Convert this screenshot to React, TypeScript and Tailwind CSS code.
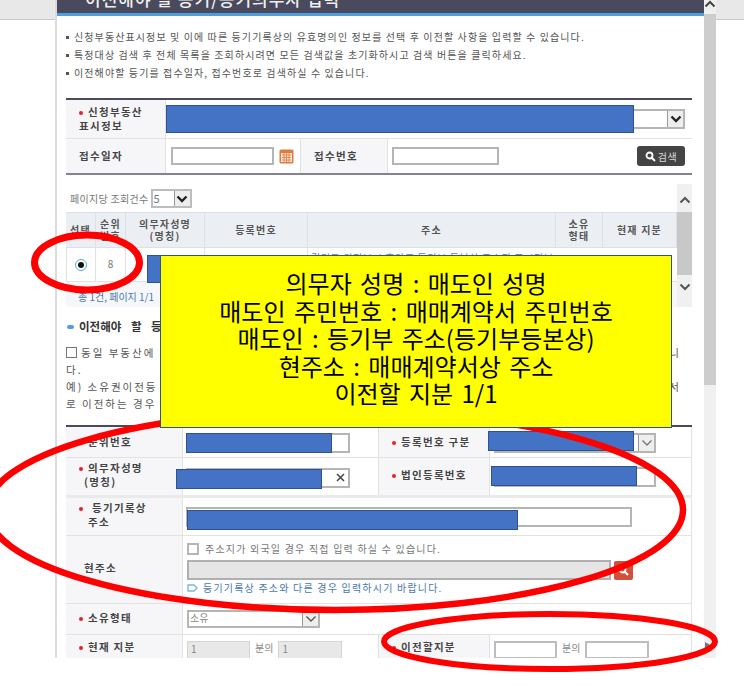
import React from "react";

const Chev = ({ c = "#222", w = 2.4 }: { c?: string; w?: number }) => (
  <svg width="12" height="8" viewBox="0 0 12 8" fill="none">
    <path d="M1.5 1.5 L6 6 L10.5 1.5" stroke={c} strokeWidth={w} />
  </svg>
);

const ChevBox = ({ w = "w-[16px]", c, sw }: { w?: string; c?: string; sw?: number }) => (
  <span className={`${w} h-full bg-[#eeeeee] border-l border-[#999] flex items-center justify-center`}>
    <Chev c={c} w={sw} />
  </span>
);

const Star = () => <span className="inline-block w-[4px] h-[4px] rounded-full bg-[#e8202a] mr-[5px] align-middle" />;

const Label = ({ children, w, star = true, h }: { children: React.ReactNode; w: string; star?: boolean; h?: string }) => (
  <div className={`${w} ${h ?? ""} shrink-0 bg-[#f6f6f9] flex items-center text-[10.5px] font-bold tracking-[1.3px] leading-[14px] text-[#444] pl-[13px]`}>
    <div>
      {star ? <Star /> : null}
      {children}
    </div>
  </div>
);

const Box = ({ cls }: { cls: string }) => <div className={`border-2 border-[#b5b5b5] ${cls}`} />;

const Th = ({ w, children }: { w: string; children: React.ReactNode }) => (
  <div className={`${w} shrink-0 h-full border-r border-[#dde0e5] flex items-center justify-center text-center text-[10px] font-bold tracking-[1.2px] leading-[12px] text-[#555]`}>
    <div>{children}</div>
  </div>
);

export default function App() {
  return (
    <div className="relative w-[744px] h-[686px] bg-white overflow-hidden font-['Noto_Sans_CJK_KR','Noto_Sans',sans-serif]">
      <div className="flex h-[658px]">
        <div className="w-[55px] shrink-0">
          <div className="h-[20px] bg-[#e8e8e8] border-b border-[#c8c8c8]" />
        </div>

        <div className="w-[649px] shrink-0 border-l-2 border-[#dcdcdc] h-full overflow-hidden">
          <div className="h-[16px] bg-[#4a4a5e] border-b-[3px] border-[#4f9fdc] overflow-hidden pl-[28px]">
            <div className="text-[#f0f0f0] text-[17px] font-medium leading-[20px] tracking-[1px] -mt-[11px] whitespace-nowrap">이전해야 할 등기/등기의무자 입력</div>
          </div>

          <div className="pl-[9px] pr-[12px]">
            <ul className="pt-[12px] h-[82px] text-[10px] leading-[18px] tracking-[1.1px] text-[#555]">
              <li className="flex items-center whitespace-nowrap"><span className="w-[3px] h-[3px] bg-[#555] mr-[5px]" />신청부동산표시정보 및 이에 따른 등기기록상의 유효명의인 정보를 선택 후 이전할 사항을 입력할 수 있습니다.</li>
              <li className="flex items-center whitespace-nowrap"><span className="w-[3px] h-[3px] bg-[#555] mr-[5px]" />특정대상 검색 후 전체 목록을 조회하시려면 모든 검색값을 초기화하시고 검색 버튼을 클릭하세요.</li>
              <li className="flex items-center whitespace-nowrap"><span className="w-[3px] h-[3px] bg-[#555] mr-[5px]" />이전해야할 등기를 접수일자, 접수번호로 검색하실 수 있습니다.</li>
            </ul>

            <div className="border-t-2 border-[#4a4a5e] border-b-2 border-b-[#84848f]">
              <div className="flex h-[39px] border-b border-[#e2e2e2]">
                <Label w="w-[99px]">신청부동산<br />표시정보</Label>
                <div className="flex-1 border-l border-[#e2e2e2] flex items-center pl-[6px] pr-[7px] pb-[1px]">
                  <div className="flex-1 h-[20px] border-2 border-[#b5b5b5] flex justify-end">
                    <ChevBox />
                  </div>
                </div>
              </div>
              <div className="flex h-[34px]">
                <Label w="w-[99px]" star={false}>접수일자</Label>
                <div className="w-[136px] border-x border-[#e2e2e2] flex items-center pl-[5px] gap-[5px]">
                  <Box cls="w-[103px] h-[18px] border-[#b0b0b0]" />
                  <svg width="15" height="16" viewBox="0 0 15 16">
                    <rect x="0.5" y="1.5" width="14" height="14" rx="1.5" fill="#e07a3e" />
                    <rect x="2" y="5" width="11" height="9" fill="#fbe6d4" />
                    <path d="M3 7h9M3 9.5h9M3 12h9M5 5v9M7.5 5v9M10 5v9" stroke="#e07a3e" strokeWidth="0.8" />
                  </svg>
                </div>
                <Label w="w-[86px]" star={false}>접수번호</Label>
                <div className="flex-1 border-l border-[#e2e2e2] flex items-center justify-between pl-[4px] pr-[7px]">
                  <Box cls="w-[107px] h-[18px] border-[#b0b0b0]" />
                  <div className="w-[48px] h-[20px] bg-[#444444] rounded-[3px] flex items-center justify-center gap-[2px] text-[10px] tracking-[0.5px] text-[#d8d8d8]">
                    <svg width="11" height="11" viewBox="0 0 11 11" fill="none">
                      <circle cx="4.5" cy="4.5" r="3" stroke="#fff" strokeWidth="1.8" />
                      <path d="M7 7 L10 10" stroke="#fff" strokeWidth="2" />
                    </svg>
                    검색
                  </div>
                </div>
              </div>
            </div>

            <div className="relative mt-[9px] h-[123px] flex">
              <div className="w-[611px] shrink-0">
                <div className="h-[28px] flex items-start pt-[5px] pl-[4px] text-[10px] leading-[19px] text-[#777]">
                  <span className="tracking-[0.3px]">페이지당 조회건수</span>
                  <div className="ml-[2px] w-[41px] h-[19px] border-2 border-[#bdbdbd] flex justify-between pl-[1px] leading-[14px] text-[11px]">
                    5
                    <ChevBox w="w-[16px]" />
                  </div>
                </div>
                <div className="flex h-[36px] bg-[#ebeef3] border-y border-[#dde0e5]">
                  <Th w="w-[30px]">선택</Th>
                  <Th w="w-[30px]">순위<br />번호</Th>
                  <Th w="w-[79px]">의무자성명<br />(명칭)</Th>
                  <Th w="w-[103px]">등록번호</Th>
                  <Th w="w-[248px]">주소</Th>
                  <Th w="w-[47px]">소유<br />형태</Th>
                  <Th w="w-[74px]">현재 지분</Th>
                </div>
                <div className="flex h-[34px] border-b border-[#e2e2e2] text-[10px] text-[#777]">
                  <div className="w-[30px] border-x border-[#e2e2e2] flex items-center justify-center">
                    <span className="w-[12px] h-[12px] rounded-full border border-[#4fa8dc] flex items-center justify-center">
                      <span className="w-[6px] h-[6px] rounded-full bg-[#111]" />
                    </span>
                  </div>
                  <div className="w-[30px] border-r border-[#e2e2e2] text-center pt-[10px] leading-[12px]">8</div>
                  <div className="w-[79px] border-r border-[#e2e2e2]" />
                  <div className="w-[103px] border-r border-[#e2e2e2]" />
                  <div className="w-[248px] pl-[3px] leading-[12px] pt-[4px] tracking-[0.6px] whitespace-nowrap overflow-hidden">경기도 의정부시 호암로 등기부 등본상 주소지 표시정보</div>
                </div>
                <div className="h-[25px] bg-[#f5f7fb] pl-[12px] pt-[8px] text-[10px] leading-[14px] text-[#4a78ad]">총 1건, 페이지 1/1</div>
              </div>
              <div className="w-[15px] shrink-0 h-full flex flex-col bg-[#f0f0f0]">
                <div className="h-[28px] flex items-center justify-center pt-[3px]"><span className="rotate-180 flex"><Chev c="#555" w={2} /></span></div>
                <div className="h-[63px] bg-[#c8c8c8]" />
                <div className="h-[24px] flex items-center justify-center"><Chev c="#555" w={2} /></div>
              </div>
            </div>

            <div className="mt-[12px] flex items-center h-[16px] text-[11.5px] font-bold [word-spacing:7px] text-[#333] pl-[1px]">
              <span className="w-[7px] h-[4px] rounded-full bg-[#4f9fdc] mr-[5px]" />
              이전해야 할 등기사항
            </div>
            <div className="mt-[9px] text-[10.5px] leading-[17px] tracking-[2px] text-[#555] h-[81px]">
              <div className="flex justify-between pr-[11px] items-center">
                <span className="flex items-center"><span className="w-[11px] h-[11px] border border-[#777] mr-[4px]" />동일 부동산에</span><span>니</span>
              </div>
              <div>다.</div>
              <div className="flex justify-between pr-[11px]"><span>예) 소유권이전등</span><span>서</span></div>
              <div>로 이전하는 경우</div>
            </div>

            <div className="border-t-2 border-[#4a4a5e] text-[#444]">
              <div className="flex h-[31px] border-b border-[#e2e2e2] border-r">
                <Label w="w-[116px]" h="pb-[1px]">순위번호</Label>
                <div className="w-[197px] border-x border-[#e2e2e2] flex items-center pl-[3px] pt-[1px]"><Box cls="w-[164px] h-[20px]" /></div>
                <Label w="w-[110px]" h="pb-[1px]">등록번호 구분</Label>
                <div className="flex-1 border-l border-[#e2e2e2] flex items-center pl-[4px] pt-[1px]">
                  <div className="w-[162px] h-[20px] border-2 border-[#b5b5b5] flex justify-end"><ChevBox c="#777" sw={1.4} /></div>
                </div>
              </div>
              <div className="flex h-[40px] border-b-[3px] border-[#eaeaea] border-r border-r-[#e2e2e2]">
                <Label w="w-[116px]" h="pb-[3px]">의무자성명<br /><span className="ml-[5px]">(명칭)</span></Label>
                <div className="w-[197px] border-x border-[#e2e2e2] flex items-center pl-[3px] pt-[2px]">
                  <div className="w-[164px] h-[20px] border-2 border-[#b5b5b5] flex justify-end items-center pr-[3px]">
                    <svg width="9" height="9" viewBox="0 0 9 9"><path d="M1 1 L8 8 M8 1 L1 8" stroke="#444" strokeWidth="1.5" /></svg>
                  </div>
                </div>
                <Label w="w-[110px]" h="pb-[3px]">법인등록번호</Label>
                <div className="flex-1 border-l border-[#e2e2e2] flex items-center pl-[4px]"><Box cls="w-[162px] h-[20px]" /></div>
              </div>
              <div className="flex h-[38px] border-b border-[#e2e2e2] border-r">
                <Label w="w-[116px]" h="pb-[4px]"><span className="ml-[4px]">등기기록상</span><br /><span className="ml-[9px]">주소</span></Label>
                <div className="flex-1 border-l border-[#e2e2e2] flex items-start pl-[3px] pt-[9px]"><Box cls="w-[446px] h-[20px]" /></div>
              </div>
              <div className="flex h-[68px] border-b border-[#e2e2e2] border-r">
                <Label w="w-[116px]" star={false} h="pb-[3px]"><span className="ml-[5px]">현주소</span></Label>
                <div className="flex-1 border-l border-[#e2e2e2] pl-[4px] pt-[6px] text-[10px] tracking-[1.2px] leading-[14px] text-[#777]">
                  <div className="flex items-center h-[14px] whitespace-nowrap">
                    <span className="w-[12px] h-[12px] border-2 border-[#b5b5b5] mr-[6px]" />
                    주소지가 외국일 경우 직접 입력 하실 수 있습니다.
                  </div>
                  <div className="flex items-center gap-[3px] mt-[4px]">
                    <div className="w-[424px] h-[20px] bg-[#e5e5e5] border-2 border-[#b0b0b0]" />
                    <div className="w-[19px] h-[19px] rounded-[2px] bg-[#d2503a] flex items-center justify-center">
                      <svg width="11" height="11" viewBox="0 0 11 11" fill="none">
                        <circle cx="4.5" cy="4.5" r="3" stroke="#fff" strokeWidth="1.8" />
                        <path d="M7 7 L10 10" stroke="#fff" strokeWidth="2" />
                      </svg>
                    </div>
                  </div>
                  <div className="flex items-center mt-[1px] h-[14px] text-[#4a78ad] whitespace-nowrap">
                    <svg width="11" height="8" viewBox="0 0 11 8" fill="none" className="mr-[5px]">
                      <path d="M1 1 H7 L10 4 L7 7 H1 Z" stroke="#7fb6de" strokeWidth="1.4" />
                    </svg>
                    등기기록상 주소와 다른 경우 입력하시기 바랍니다.
                  </div>
                </div>
              </div>
              <div className="flex h-[31px] border-b border-[#e2e2e2] border-r">
                <Label w="w-[116px]" h="pb-[3px]">소유형태</Label>
                <div className="flex-1 border-l border-[#e2e2e2] flex items-start pl-[4px] pt-[6px]">
                  <div className="w-[133px] h-[18px] border-2 border-[#b5b5b5] flex justify-between pl-[1px] text-[10px] leading-[12px] text-[#888]">
                    소유
                    <ChevBox w="w-[16px]" c="#555" sw={1.4} />
                  </div>
                </div>
              </div>
              <div className="flex h-[24px] border-r border-[#e2e2e2]">
                <Label w="w-[116px]" h="pb-[1px]">현재 지분</Label>
                <div className="w-[197px] border-x border-[#e2e2e2] flex items-start pl-[4px] pt-[6px] text-[10px] leading-[14px] text-[#888]">
                  <div className="w-[63px] h-[18px] bg-[#e8e8e8] border border-[#d4d4d4] pl-[3px]">1</div>
                  <span className="mx-[5px]">분의</span>
                  <div className="w-[64px] h-[18px] bg-[#e8e8e8] border border-[#d4d4d4] pl-[3px]">1</div>
                </div>
                <Label w="w-[110px]" h="pb-[1px]">이전할지분</Label>
                <div className="flex-1 border-l border-[#e2e2e2] flex items-start pl-[4px] pt-[6px] text-[10px] leading-[14px] text-[#888]">
                  <Box cls="w-[63px] h-[18px] border-[#bdbdbd]" />
                  <span className="mx-[5px]">분의</span>
                  <Box cls="w-[64px] h-[18px] border-[#bdbdbd]" />
                </div>
              </div>
            </div>
          </div>
        </div>

        <div className="w-[12px] shrink-0 h-full flex flex-col bg-[#f0f0f0]">
          <div className="h-[14px] flex items-start justify-center"><span className="rotate-180 flex"><Chev c="#444" w={2} /></span></div>
          <div className="h-[371px] bg-[#cdcdcd]" />
        </div>
        <div className="flex-1">
          <div className="h-[20px] bg-[#e8e8e8] border-b border-[#c8c8c8]" />
        </div>
      </div>

      {/* masking rectangles */}
      <div className="absolute left-[166px] top-[105px] w-[468px] h-[28px] bg-[#4472c4] border border-[#2f528f]" />
      <div className="absolute left-[147px] top-[255px] w-[40px] h-[28px] bg-[#4472c4] border border-[#2f528f]" />
      <div className="absolute left-[186px] top-[433px] w-[146px] h-[20px] bg-[#4472c4] border border-[#2f528f]" />
      <div className="absolute left-[488px] top-[431px] w-[146px] h-[20px] bg-[#4472c4] border border-[#2f528f]" />
      <div className="absolute left-[176px] top-[469px] w-[146px] h-[20px] bg-[#4472c4] border border-[#2f528f]" />
      <div className="absolute left-[491px] top-[466px] w-[146px] h-[20px] bg-[#4472c4] border border-[#2f528f]" />
      <div className="absolute left-[187px] top-[510px] w-[331px] h-[20px] bg-[#4472c4] border border-[#2f528f]" />

      {/* hand-drawn red annotations */}
      <svg className="absolute left-0 top-0" width="744" height="686" viewBox="0 0 744 686" fill="none">
        <path d="M705 642 L712 646 L705 650 Z" fill="#777" />
        <ellipse cx="87" cy="262.5" rx="52.5" ry="27.5" stroke="#ff0000" strokeWidth="7" />
        <ellipse cx="335" cy="510" rx="348" ry="100" stroke="#ff0000" strokeWidth="6.5" />
        <ellipse cx="549.5" cy="641.5" rx="165.5" ry="27.5" stroke="#ff0000" strokeWidth="6" />
      </svg>

      {/* yellow note */}
      <div className="absolute left-[160px] top-[255px] w-[512px] h-[173px] bg-[#ffff00] border border-[#2f528f] pt-[13px] text-center text-[24px] [word-spacing:3px] leading-[27.6px] text-black">
        <div>의무자 성명 : 매도인 성명</div>
        <div>매도인 주민번호 : 매매계약서 주민번호</div>
        <div>매도인 : 등기부 주소(등기부등본상)</div>
        <div>현주소 : 매매계약서상 주소</div>
        <div>이전할 지분 1/1</div>
      </div>
    </div>
  );
}
